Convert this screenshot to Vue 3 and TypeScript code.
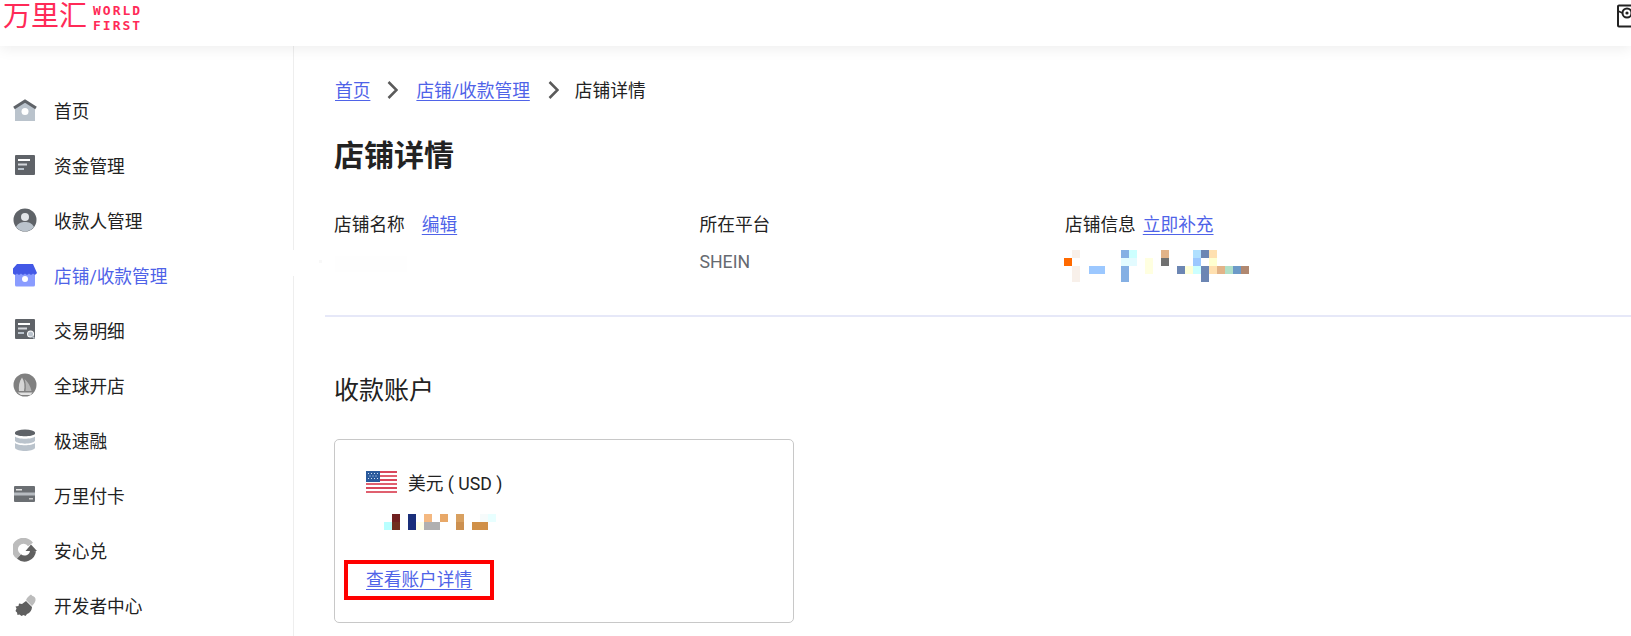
<script setup lang="ts">
interface NavItem { label: string; icon: string; active?: boolean }
const nav: NavItem[] = [
  { label: '首页', icon: 'home' },
  { label: '资金管理', icon: 'fund' },
  { label: '收款人管理', icon: 'person' },
  { label: '店铺/收款管理', icon: 'store', active: true },
  { label: '交易明细', icon: 'trans' },
  { label: '全球开店', icon: 'sail' },
  { label: '极速融', icon: 'db' },
  { label: '万里付卡', icon: 'card' },
  { label: '安心兑', icon: 'swap' },
  { label: '开发者中心', icon: 'dev' },
]
type Tile = [number, number, number, number, string]
const mosaicA: Tile[] = [
  [8, 0, 8, 8, '#f8f0ea'], [8, 16, 8, 16, '#f8f0ea'], [0, 8, 8, 8, '#ff6a00'],
  [25, 16, 16, 8, '#9cc8ff'], [57, 0, 8, 8, '#85b0e4'], [65, 0, 8, 8, '#ccffff'],
  [57, 8, 16, 8, '#e3fbff'], [57, 16, 8, 16, '#85b0e4'], [97, 0, 8, 8, '#e2b388'],
  [97, 8, 8, 8, '#707070'], [81, 8, 8, 16, '#ffffe0'], [113, 16, 8, 8, '#6c86b3'],
  [121, 16, 8, 8, '#ffffd8'], [129, 16, 8, 8, '#ccffff'], [129, 0, 8, 8, '#b0e0ff'],
  [129, 8, 8, 8, '#9cc8ff'], [137, 0, 8, 8, '#6c86b3'], [145, 0, 8, 8, '#ffe0b0'],
  [145, 8, 8, 8, '#ffffd0'], [137, 16, 8, 16, '#6c86b3'], [145, 16, 8, 8, '#ffe0b0'],
  [153, 16, 8, 8, '#e2b388'], [161, 16, 8, 8, '#b0e0c8'], [169, 16, 8, 8, '#6c9ac8'],
  [177, 16, 8, 8, '#b08870'],
]
const mosaicB: Tile[] = [
  [0, 8, 8, 8, '#b8ffff'], [8, 0, 8, 8, '#702020'], [8, 8, 8, 8, '#703020'],
  [24, 0, 8, 16, '#1a2f7a'], [40, 0, 8, 8, '#f4b880'], [40, 8, 16, 8, '#b0b0b0'],
  [56, 0, 8, 8, '#e8a868'], [72, 0, 8, 8, '#d8a060'], [72, 8, 8, 8, '#cc9050'],
  [88, 8, 16, 8, '#d09048'], [96, 0, 8, 8, '#f6fbfb'], [104, 0, 8, 8, '#e8ffff'],
  [32, 8, 8, 8, '#ffffe8'],
]
</script>

<template>
  <div class="page">
    <header class="top">
      <div class="logo">
        <span class="logo-cn">万里汇</span>
        <span class="logo-en"><span>WORLD</span><span>FIRST</span></span>
      </div>
      <svg class="top-icon" width="14" height="24" viewBox="0 0 14 24">
        <path d="M14 1.5H2a1 1 0 0 0-1 1V21.500a1 1 0 0 0 1 1H14" fill="none" stroke="#222" stroke-width="2" />
        <circle cx="10" cy="9" r="4.500" fill="none" stroke="#222" stroke-width="2" />
        <circle cx="10" cy="9" r="1.600" fill="#222" />
        <path d="M1 7 5.500 9" stroke="#222" stroke-width="1.500" />
      </svg>
    </header>

    <div class="body">
      <aside class="side">
        <div v-for="item in nav" :key="item.label" class="nav-row" :class="{ active: item.active }">
          <svg class="nav-icon" width="24" height="24" viewBox="0 0 24 24">
            <template v-if="item.icon === 'home'">
              <path d="M2 9 12 2.500 22 9V23H2Z" fill="#bac3cc" />
              <path d="M1 10 12 3l11 7" fill="none" stroke="#5f6368" stroke-width="3" />
              <circle cx="12" cy="13.500" r="3.500" fill="#fff" />
            </template>
            <template v-else-if="item.icon === 'fund'">
              <rect x="2" y="2" width="20" height="20" rx="1" fill="#5f6368" />
              <rect x="5" y="6" width="12" height="2" fill="#fff" />
              <rect x="5" y="10.500" width="9" height="2" fill="#d5d8dc" />
              <rect x="5" y="15" width="6" height="2" fill="#bac3cc" />
            </template>
            <template v-else-if="item.icon === 'person'">
              <circle cx="12" cy="12" r="11.500" fill="#5f6368" />
              <path d="M3 19c2-4 5.500-5 9-5s7 1 9 5a11.500 11.500 0 0 1-18 0Z" fill="#bac3cc" />
              <circle cx="12" cy="9" r="4" fill="#e2e5e8" />
            </template>
            <template v-else-if="item.icon === 'store'">
              <rect x="2" y="8" width="20" height="15.500" rx="1.500" fill="#8a9cff" />
              <path d="M4 1h16l4 9q-2 3-4 .5-2 2.500-4 0-2 2.500-4 0-2 2.500-4 0-2 2.500-4 0-2 2.500-4 0-2 2.500-4-.5Z" fill="#4358e6" />
              <circle cx="12" cy="16" r="3" fill="#fff" />
            </template>
            <template v-else-if="item.icon === 'trans'">
              <rect x="2" y="1" width="20" height="20" rx="1" fill="#5f6368" />
              <rect x="5" y="5" width="12" height="2" fill="#fff" />
              <rect x="5" y="9.500" width="9" height="2" fill="#d5d8dc" />
              <rect x="5" y="14" width="6" height="2" fill="#bac3cc" />
              <circle cx="17.500" cy="16" r="3.500" fill="#fff" />
              <circle cx="17.500" cy="16" r="2.500" fill="#bac3cc" />
              <path d="m19 18 2.500 2.500" stroke="#bac3cc" stroke-width="1.500" />
            </template>
            <template v-else-if="item.icon === 'sail'">
              <circle cx="12" cy="12" r="11.500" fill="#808080" />
              <path d="M9 4.500C6 9 5.500 13 6 18h5C12 13 11.500 8 9 4.500Z" fill="#d6d6d6" />
              <path d="M11.500 6c3.500 3 6 7 7 12h-6c.5-4 .5-8-1-12Z" fill="#b5b5b5" />
              <path d="M4.500 19.500h15l-2 2.500H8Z" fill="#e2e2e2" />
            </template>
            <template v-else-if="item.icon === 'db'">
              <path d="M2 8.500c3 3 17 3 20 0V13c-3 3.500-17 3.500-20 0Z" fill="#bac3cc" />
              <path d="M2 15c3 3 17 3 20 0v5c-2 4-18 4-20 0Z" fill="#bac3cc" />
              <ellipse cx="12" cy="4.500" rx="10" ry="3" fill="#5f6368" />
              <path d="M2 4.500h20V6c-3 3-17 3-20 0Z" fill="#5f6368" />
            </template>
            <template v-else-if="item.icon === 'card'">
              <rect x="1" y="3" width="21" height="16" rx="1" fill="#6b6f73" />
              <rect x="3" y="6" width="6" height="1.500" fill="#e4e4e4" />
              <rect x="1" y="9.500" width="21" height="3" fill="#b7bcc1" />
              <rect x="16" y="15" width="4" height="1.500" fill="#c9c9c9" />
            </template>
            <template v-else-if="item.icon === 'swap'">
              <path d="M17.500 6.500A8.500 8.500 0 1 0 6 18.500" fill="none" stroke="#bcbcbc" stroke-width="6" />
              <path d="M6 18.500A8.500 8.500 0 0 0 20 13" fill="none" stroke="#606060" stroke-width="6" />
              <path d="M12.500 13 18 6.500 24 13Z" fill="#606060" />
            </template>
            <template v-else>
              <path d="M13 7c1-3 4-4.500 5-5.500l1.500 1.500c2 .5 3.500 2 3 4.500-.5 2.500-2.500 4.500-3.500 5.500Z" fill="#bcbcbc" />
              <path d="M13 8l6 6c0 3-2 6-5 7l-1.500 2-2-1-2 1-2-1.500-2 .500-.500-2.500-1.500-1.500 1-2.500-1-2 3-.500.500-2.500 3 .500Z" fill="#5f5f5f" />
            </template>
          </svg>
          <span class="nav-label">{{ item.label }}</span>
        </div>
      </aside>

      <main class="main">
        <nav class="crumbs">
          <a class="link">首页</a>
          <svg class="chev" width="11" height="18" viewBox="0 0 11 18"><path d="M1.500 1 9.500 9l-8 8" fill="none" stroke="#5a5a5a" stroke-width="2.500" /></svg>
          <a class="link">店铺/收款管理</a>
          <svg class="chev last" width="11" height="18" viewBox="0 0 11 18"><path d="M1.500 1 9.500 9l-8 8" fill="none" stroke="#5a5a5a" stroke-width="2.500" /></svg>
          <span>店铺详情</span>
        </nav>

        <h1 class="title">店铺详情</h1>

        <section class="info">
          <div class="col">
            <div class="label">店铺名称<a class="link edit">编辑</a></div>
            <div class="value">
              <svg class="faint" width="126" height="26" viewBox="0 0 126 26">
                <rect width="126" height="26" fill="#fff" />
                <rect x="44" y="6" width="72" height="16" fill="#fefefe" />
                <rect x="28" y="10" width="3" height="3" fill="#f8f8f8" />
              </svg>
            </div>
          </div>
          <div class="col">
            <div class="label">所在平台</div>
            <div class="value shein">SHEIN</div>
          </div>
          <div class="col">
            <div class="label">店铺信息<a class="link fill">立即补充</a></div>
            <div class="value">
              <svg class="mosaic-a" width="185" height="32" viewBox="0 0 185 32">
                <rect v-for="(t, i) in mosaicA" :key="i" :x="t[0]" :y="t[1]" :width="t[2]" :height="t[3]" :fill="t[4]" />
              </svg>
            </div>
          </div>
        </section>

        <div class="rule"></div>

        <h2 class="sub">收款账户</h2>

        <section class="account">
          <div class="cur">
            <svg class="flag" width="31" height="23" viewBox="0 0 31 23">
              <rect width="31" height="23" rx="2" fill="#fff" />
              <rect y="0" width="31" height="2" fill="#d9475c" />
              <rect y="4" width="31" height="2" fill="#e0606f" />
              <rect y="8" width="31" height="2" fill="#d9475c" />
              <rect y="12" width="31" height="2" fill="#e0606f" />
              <rect y="16" width="31" height="2" fill="#d9475c" />
              <rect y="20" width="31" height="2" fill="#e0606f" />
              <rect width="14" height="11" fill="#2a5a9c" />
              <g fill="#cfe0f5">
                <rect x="2" y="2" width="1" height="1" /><rect x="5" y="2" width="1" height="1" /><rect x="8" y="2" width="1" height="1" /><rect x="11" y="2" width="1" height="1" />
                <rect x="3.500" y="4.500" width="1" height="1" /><rect x="6.500" y="4.500" width="1" height="1" /><rect x="9.500" y="4.500" width="1" height="1" />
                <rect x="2" y="7" width="1" height="1" /><rect x="5" y="7" width="1" height="1" /><rect x="8" y="7" width="1" height="1" /><rect x="11" y="7" width="1" height="1" />
              </g>
            </svg>
            <span>美元 ( USD )</span>
          </div>
          <svg class="mosaic-b" width="112" height="16" viewBox="0 0 112 16">
            <rect v-for="(t, i) in mosaicB" :key="i" :x="t[0]" :y="t[1]" :width="t[2]" :height="t[3]" :fill="t[4]" />
          </svg>
          <div class="mark"><a class="link">查看账户详情</a></div>
        </section>
      </main>
    </div>
  </div>
</template>

<style>
html, body { margin: 0; background: #fff; overflow: hidden; }
</style>

<style scoped>
.page {
  width: 100%;
  height: 636px;
  overflow: hidden;
  display: flex;
  flex-direction: column;
  font-family: Roboto, "Noto Sans CJK SC", sans-serif;
  font-size: 17.7px;
  color: #222;
}
.top {
  position: relative;
  z-index: 2;
  flex: none;
  height: 46px;
  background: #fff;
  box-shadow: 0 2px 14px rgba(0, 0, 0, 0.08);
  display: flex;
  justify-content: space-between;
  padding-left: 3px;
}
.logo { display: flex; align-items: flex-start; color: #ff2a57; }
.logo-cn { font-size: 28px; line-height: 34px; font-weight: 400; }
.logo-en {
  display: flex;
  flex-direction: column;
  align-items: center;
  margin: 3px 0 0 6px;
  font-family: "DejaVu Sans Mono", monospace;
  font-size: 13px;
  line-height: 15px;
  font-weight: 700;
  letter-spacing: 2px;
}
.top-icon { margin-top: 4px; }
.body { flex: 1; display: flex; min-height: 0; }
.side {
  flex: none;
  width: 293px;
  padding-top: 36px;
  border-right: 1px solid #eeeeee;
}
.nav-row {
  height: 55px;
  display: flex;
  align-items: center;
  padding-left: 13px;
  color: #222;
}
.nav-row.active { color: #4f63e8; }
.nav-icon { flex: none; }
.nav-label { margin-left: 17px; }
.main { flex: 1; min-width: 0; padding-top: 31px; }
.crumbs {
  display: flex;
  align-items: center;
  height: 24px;
  margin-left: 41px;
}
.chev { margin: 2px 18px 0 17px; }
.chev.last { margin: 2px 16px 0 18px; }
.link { color: #4f63e8; text-decoration: underline; text-underline-offset: 3px; cursor: pointer; }
.title {
  margin: 35px 0 0 40px;
  font-size: 30px;
  line-height: 40px;
  font-weight: 700;
  color: #222;
}
.info { display: flex; margin: 37px 0 0 40px; }
.col { flex: none; width: 365.5px; position: relative; }
.label { height: 24px; line-height: 24px; }
.edit { margin-left: 17px; }
.fill { margin-left: 7px; }
.value { height: 24px; line-height: 24px; margin-top: 13px; position: relative; }
.shein { color: #666a70; }
.faint { position: absolute; left: -43px; top: 0; }
.mosaic-a { position: absolute; left: -1px; top: 0; }
.rule { height: 2px; background: #e6e8f8; margin: 41px 0 0 31px; }
.sub {
  margin: 56px 0 0 40px;
  font-size: 25px;
  line-height: 36px;
  font-weight: 400;
  color: #222;
}
.account {
  box-sizing: border-box;
  width: 460px;
  height: 184px;
  margin: 30px 0 0 40px;
  padding: 30px 0 0 9px;
  border: 1px solid #c8c8c8;
  border-radius: 5px;
}
.cur { display: flex; align-items: center; height: 24px; margin-left: 22px; }
.flag { flex: none; margin-right: 11px; }
.mosaic-b { display: block; margin: 20px 0 0 40px; }
.mark {
  box-sizing: border-box;
  width: 150px;
  height: 40px;
  margin-top: 30px;
  padding: 0 0 5px 18px;
  border: 4px solid #f00;
  display: flex;
  align-items: center;
}
</style>
